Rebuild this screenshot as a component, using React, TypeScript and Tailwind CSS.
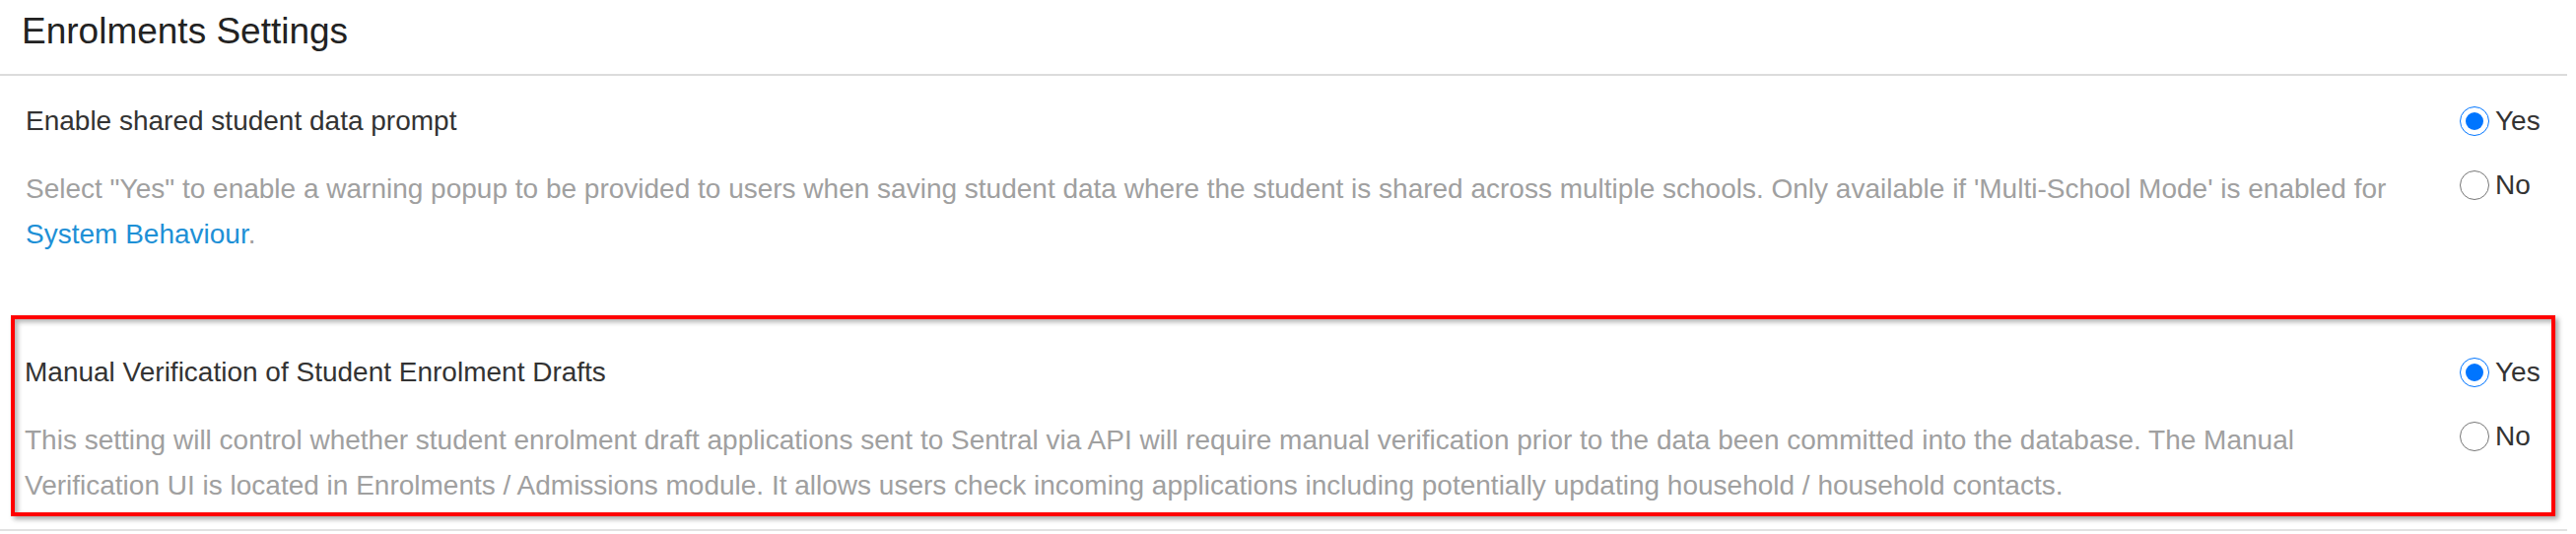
import React from "react";

// ─── Radio pair ───────────────────────────────────────────────────────
type YesNoProps = { name: string; value: "yes" | "no" };

function YesNo({ name, value }: YesNoProps) {
  return (
    <div className="flex w-[93px] shrink-0 flex-col gap-[19px]">
      {(["yes", "no"] as const).map((v) => (
        <label key={v} className="flex h-[46px] items-center gap-[6px] text-[28px] text-[#333]">
          <input
            type="radio"
            name={name}
            defaultChecked={value === v}
            className="m-0 h-[30px] w-[30px] shrink-0"
          />
          <span>{v === "yes" ? "Yes" : "No"}</span>
        </label>
      ))}
    </div>
  );
}

// ─── Setting row ──────────────────────────────────────────────────────
type SettingProps = {
  title: string;
  children: React.ReactNode;
  name: string;
};

function Setting({ title, children, name }: SettingProps) {
  return (
    <div className="flex">
      <div className="flex-1 pr-[40px]">
        <p className="text-[28px] leading-[46px] text-[#333]">{title}</p>
        <p className="mt-[23px] text-[28px] leading-[46px] text-[#a0a0a0]">{children}</p>
      </div>
      <YesNo name={name} value="yes" />
    </div>
  );
}

export default function App() {
  return (
    <div className="w-[2614px] bg-white pr-[9px] font-['Liberation_Sans',Arial,sans-serif]">
      <div className="border-b-2 border-[#dcdcdc] pb-[21px] pl-[22px] pt-[10px]">
        <h1 className="text-[37px] leading-[44px] text-[#222]">Enrolments Settings</h1>
      </div>

      <div className="pl-[26px] pr-[16px] pt-[23px]">
        <Setting title="Enable shared student data prompt" name="shared">
          Select "Yes" to enable a warning popup to be provided to users when saving student data
          where the student is shared across multiple schools. Only available if 'Multi-School
          Mode' is enabled for <a className="text-[#1e90d6]">System Behaviour</a>.
        </Setting>
      </div>

      <div className="border-b-2 border-[#e2e2e2] pb-[13px] pt-[59px]">
        <div className="ml-[11px] mr-[12px] border-4 border-[#ff0000] pb-[4px] pl-[10px] pt-[31px] shadow-[3px_3px_5px_rgba(0,0,0,0.35),inset_3px_3px_5px_rgba(0,0,0,0.3)]">
          <Setting title="Manual Verification of Student Enrolment Drafts" name="manual">
            This setting will control whether student enrolment draft applications sent to Sentral
            via API will require manual verification prior to the data been committed into the
            database. The Manual Verification UI is located in Enrolments / Admissions module. It
            allows users check incoming applications including potentially updating household /
            household contacts.
          </Setting>
        </div>
      </div>
    </div>
  );
}
